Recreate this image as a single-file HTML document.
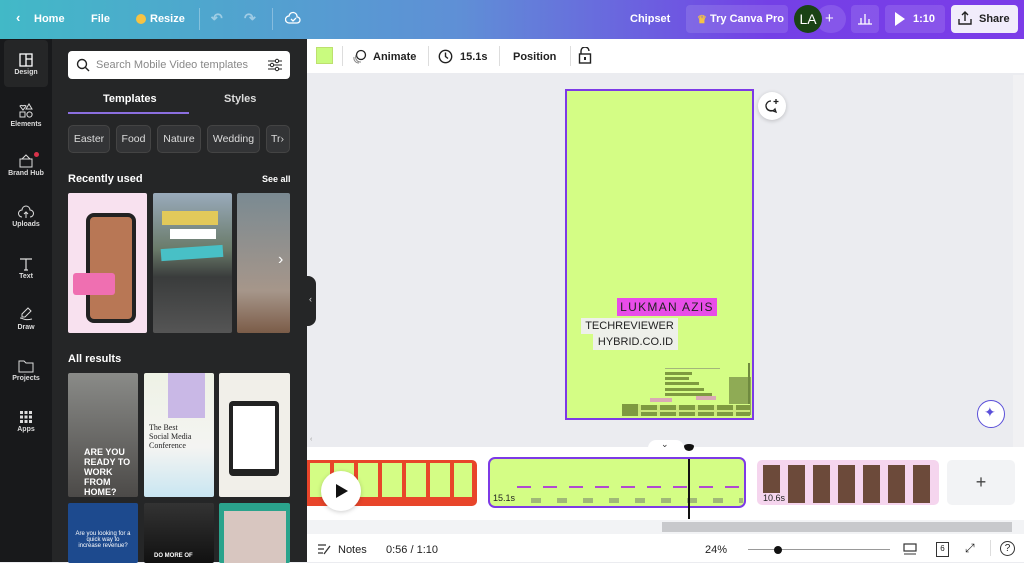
<!DOCTYPE html>
<html><head><meta charset="utf-8"><style>
*{box-sizing:border-box;margin:0;padding:0}
body{width:1024px;height:562px;overflow:hidden;font-family:"Liberation Sans",sans-serif;position:relative;background:#ebecf0}
.a{position:absolute}
.top{left:0;top:0;width:1024px;height:39px;background:linear-gradient(90deg,#42b9c7 0%,#5f8fd6 45%,#7440e6 75%,#7b3ce8 100%);color:#fff;font-weight:bold;font-size:11px}
.top span{position:absolute;top:13px}
.rail{left:0;top:39px;width:52px;height:523px;background:#18191b}
.rail .it{position:absolute;left:0;width:52px;text-align:center;color:#ddd;font-size:7px;font-weight:bold}
.panel{left:52px;top:39px;width:255px;height:523px;background:#252627;color:#fff}
.chip{position:absolute;top:86px;height:28px;border:1px solid #444;border-radius:5px;background:#333436;color:#ddd;font-size:10.5px;line-height:26px;text-align:center;overflow:hidden;white-space:nowrap}
.th{position:absolute;border-radius:2px;overflow:hidden}
.tool{left:307px;top:39px;width:717px;height:34px;background:#fff;font-size:11px;font-weight:bold;color:#222}
.tool span{position:absolute;top:12px}
.tl{left:307px;top:447px;width:717px;height:87px;background:#fff}
.bot{left:307px;top:534px;width:717px;height:28px;background:#fff;font-size:11px;color:#222}
.bar{position:absolute;height:3px;background:#7e9a40}
</style></head><body>
<div class="a top">
<span style="left:16px;font-size:13px;top:10px">‹</span><span style="left:34px">Home</span><span style="left:91px">File</span>
<span style="left:136px;width:10px;height:10px;border-radius:50%;background:#f6c343;top:14px"></span><span style="left:150px">Resize</span>
<span style="left:199px;top:8px;width:1px;height:22px;background:rgba(255,255,255,.3)"></span>
<span style="left:211px;font-size:14px;top:10px;color:rgba(255,255,255,.45)">↶</span><span style="left:244px;font-size:14px;top:10px;color:rgba(255,255,255,.45)">↷</span>
<span style="left:272px;top:8px;width:1px;height:22px;background:rgba(255,255,255,.3)"></span>
<svg class="a" style="left:285px;top:11px" width="16" height="14"><path d="M4 12h8a3 3 0 0 0 0-6 4 4 0 0 0-8-1 3.5 3.5 0 0 0 0 7z M6 8l2 2 3-3" fill="none" stroke="#fff" stroke-width="1.3"/></svg>
<span style="left:630px">Chipset</span>
<div class="a" style="left:686px;top:5px;width:102px;height:28px;background:rgba(255,255,255,.12);border-radius:4px"></div>
<span style="left:697px;color:#f6c343">♛</span><span style="left:710px">Try Canva Pro</span>
<div class="a" style="left:816px;top:5px;width:30px;height:28px;border-radius:14px;background:rgba(255,255,255,.12)"></div>
<div class="a" style="left:794px;top:5px;width:28px;height:28px;border-radius:50%;background:#1a4315;font-size:14px;font-weight:normal;text-align:center;line-height:28px">LA</div>
<span style="left:825px;top:10px;font-size:15px;font-weight:normal">+</span>
<div class="a" style="left:851px;top:5px;width:28px;height:28px;background:rgba(255,255,255,.12);border-radius:4px"></div>
<svg class="a" style="left:857px;top:11px" width="16" height="14"><path d="M1 13h14M4 13V7M8 13V3M12 13V8" stroke="#fff" stroke-width="1.3"/></svg>
<div class="a" style="left:885px;top:5px;width:60px;height:28px;background:rgba(255,255,255,.12);border-radius:4px"></div>
<svg class="a" style="left:895px;top:12px" width="10" height="14"><path d="M0 0L10 7L0 14z" fill="#fff"/></svg><span style="left:913px">1:10</span>
<div class="a" style="left:951px;top:5px;width:67px;height:28px;background:#f1ecfb;border-radius:4px"></div>
<svg class="a" style="left:958px;top:11px" width="14" height="14"><path d="M1 8v5h12V8M7 10V1M4 4l3-3 3 3" fill="none" stroke="#222" stroke-width="1.4"/></svg>
<span style="left:979px;color:#222">Share</span>
</div>

<div class="a rail">
<div class="a" style="left:4px;top:1px;width:44px;height:47px;background:#252627;border-radius:4px"></div>
<div class="it" style="top:14px"><svg width="14" height="14"><rect x="1" y="1" width="12" height="12" fill="none" stroke="#fff" stroke-width="1.3"/><path d="M7 1v12M7 6h6" stroke="#fff" stroke-width="1.3"/></svg><br>Design</div>
<div class="it" style="top:64px"><svg width="16" height="16"><path d="M2 3a2 2 0 0 1 3 0 2 2 0 0 1 3 0L5 7z M11 1l3 5h-6z" fill="none" stroke="#ddd"/><rect x="2" y="9" width="5" height="5" fill="none" stroke="#ddd"/><circle cx="11.5" cy="11.5" r="2.6" fill="none" stroke="#ddd"/></svg><br>Elements</div>
<div class="it" style="top:115px"><div style="position:absolute;left:34px;top:-2px;width:5px;height:5px;border-radius:50%;background:#d9324a"></div><svg width="16" height="14"><rect x="2" y="5" width="12" height="8" fill="none" stroke="#ddd"/><path d="M4 5l4-4 4 4" fill="none" stroke="#ddd"/></svg><br>Brand Hub</div>
<div class="it" style="top:166px"><svg width="16" height="14"><path d="M4 12a3.5 3.5 0 0 1 0-7 4 4 0 0 1 8 0 3.5 3.5 0 0 1 0 7M8 13V7M6 9l2-2 2 2" fill="none" stroke="#ddd"/></svg><br>Uploads</div>
<div class="it" style="top:218px"><svg width="14" height="14"><path d="M1 2h12M7 2v11M5 13h4" stroke="#ddd" stroke-width="1.2"/></svg><br>Text</div>
<div class="it" style="top:268px"><svg width="16" height="15"><path d="M10 1l3 3-6 6H4V7z M2 11c3 0 4 3 12 1" fill="none" stroke="#ddd"/></svg><br>Draw</div>
<div class="it" style="top:320px"><svg width="16" height="14"><path d="M1 2h5l2 2h7v9H1z" fill="none" stroke="#ddd"/></svg><br>Projects</div>
<div class="it" style="top:371px"><svg width="14" height="14" fill="#ddd"><rect x="1" y="1" width="3" height="3"/><rect x="5.5" y="1" width="3" height="3"/><rect x="10" y="1" width="3" height="3"/><rect x="1" y="5.5" width="3" height="3"/><rect x="5.5" y="5.5" width="3" height="3"/><rect x="10" y="5.5" width="3" height="3"/><rect x="1" y="10" width="3" height="3"/><rect x="5.5" y="10" width="3" height="3"/><rect x="10" y="10" width="3" height="3"/></svg><br>Apps</div>
</div>

<div class="a panel">
<div class="a" style="left:16px;top:12px;width:222px;height:28px;background:#fff;border-radius:4px"></div>
<svg class="a" style="left:24px;top:19px" width="14" height="14"><circle cx="6" cy="6" r="4.5" fill="none" stroke="#222" stroke-width="1.4"/><path d="M9.5 9.5L13 13" stroke="#222" stroke-width="1.4"/></svg>
<div class="a" style="left:44px;top:20px;font-size:11px;color:#888">Search Mobile Video templates</div>
<svg class="a" style="left:215px;top:19px" width="16" height="14"><path d="M1 3h14M1 7h14M1 11h14" stroke="#222"/><circle cx="10" cy="3" r="1.7" fill="#fff" stroke="#222"/><circle cx="5" cy="7" r="1.7" fill="#fff" stroke="#222"/><circle cx="10" cy="11" r="1.7" fill="#fff" stroke="#222"/></svg>
<div class="a" style="left:51px;top:54px;font-size:11px;font-weight:bold">Templates</div>
<div class="a" style="left:172px;top:54px;font-size:11px;font-weight:bold;color:#ddd">Styles</div>
<div class="a" style="left:16px;top:73px;width:121px;height:2px;background:#8b6fe0"></div>
<div class="chip" style="left:16px;width:42px">Easter</div><div class="chip" style="left:64px;width:35px">Food</div><div class="chip" style="left:105px;width:44px">Nature</div><div class="chip" style="left:155px;width:53px">Wedding</div><div class="chip" style="left:214px;width:24px;text-align:left;padding-left:4px">Tr›</div>
<div class="a" style="left:16px;top:134px;font-size:11px;font-weight:bold">Recently used</div>
<div class="a" style="left:210px;top:135px;font-size:9px;font-weight:bold">See all</div>
<div class="th" style="left:16px;top:154px;width:79px;height:140px;background:#f8e1ef"><div class="a" style="left:18px;top:20px;width:50px;height:110px;background:#b87755;border:4px solid #222;border-radius:8px"></div><div class="a" style="left:5px;top:80px;width:42px;height:22px;background:#ef6fb1;border-radius:3px"></div></div>
<div class="th" style="left:101px;top:154px;width:79px;height:140px;background:linear-gradient(#9ab 0%,#6a7b6a 40%,#3a3c3c 60%,#555 100%)"><div class="a" style="left:9px;top:18px;width:56px;height:14px;background:#e2c95a"></div><div class="a" style="left:17px;top:36px;width:46px;height:10px;background:#fff"></div><div class="a" style="left:8px;top:54px;width:62px;height:12px;background:#48c0c6;transform:rotate(-4deg)"></div></div>
<div class="th" style="left:185px;top:154px;width:53px;height:140px;background:linear-gradient(#7a8a92,#a6968a 70%,#7b5c48)"></div>
<div class="a" style="left:226px;top:212px;color:#fff;font-size:16px">›</div>
<div class="a" style="left:16px;top:314px;font-size:11px;font-weight:bold">All results</div>
<div class="th" style="left:16px;top:334px;width:70px;height:124px;background:linear-gradient(#8a8b88,#4c4a48)"><div class="a" style="left:16px;top:74px;color:#fff;font-size:9px;font-weight:bold;line-height:10px">ARE YOU<br>READY TO<br>WORK<br>FROM<br>HOME?</div></div>
<div class="th" style="left:92px;top:334px;width:70px;height:124px;background:linear-gradient(#eef2e5,#f4f4f2 60%,#c9e6f2)"><div class="a" style="left:24px;top:0;width:37px;height:45px;background:#c9b8e6"></div><div class="a" style="left:5px;top:50px;font-family:'Liberation Serif',serif;font-size:8px;color:#222;line-height:9px">The Best<br>Social Media<br>Conference</div></div>
<div class="th" style="left:167px;top:334px;width:71px;height:124px;background:#f1efe9"><div class="a" style="left:10px;top:28px;width:50px;height:75px;background:#222;border-radius:4px"></div><div class="a" style="left:14px;top:33px;width:42px;height:63px;background:#fff"></div></div>
<div class="th" style="left:16px;top:464px;width:70px;height:60px;background:#1d4a8e"><div class="a" style="left:7px;top:28px;color:#fff;font-size:6px;text-align:center;width:56px">Are you looking for a quick way to increase revenue?</div></div>
<div class="th" style="left:92px;top:464px;width:70px;height:60px;background:linear-gradient(#333,#111)"><div class="a" style="left:10px;top:50px;color:#fff;font-size:6px;font-weight:bold">DO MORE OF</div></div>
<div class="th" style="left:167px;top:464px;width:71px;height:60px;background:#2aa38c"><div class="a" style="left:5px;top:8px;width:62px;height:52px;background:#d8c6c0"></div></div>
</div>
<div class="a" style="left:307px;top:276px;width:9px;height:50px;background:#252627;border-radius:0 8px 8px 0"></div>
<div class="a" style="left:309px;top:294px;color:#ddd;font-size:9px">‹</div>

<div class="a tool">
<div class="a" style="left:9px;top:8px;width:17px;height:17px;background:#c9fb7f;border:1px solid #bde06e"></div>
<div class="a" style="left:35px;top:7px;width:1px;height:20px;background:#ddd"></div>
<svg class="a" style="left:45px;top:10px" width="15" height="15"><circle cx="9" cy="6" r="4.5" fill="none" stroke="#222" stroke-width="1.3"/><path d="M4 6a5 5 0 0 0 5 7M2 8a5 5 0 0 0 5 6" fill="none" stroke="#888"/></svg>
<span style="left:66px">Animate</span>
<div class="a" style="left:121px;top:7px;width:1px;height:20px;background:#ddd"></div>
<svg class="a" style="left:131px;top:10px" width="15" height="15"><circle cx="7.5" cy="7.5" r="6.2" fill="none" stroke="#222" stroke-width="1.4"/><path d="M7.5 3.5v4l2.5 2" fill="none" stroke="#222" stroke-width="1.4"/></svg>
<span style="left:153px">15.1s</span>
<div class="a" style="left:192px;top:7px;width:1px;height:20px;background:#ddd"></div>
<span style="left:206px;font-weight:bold">Position</span>
<div class="a" style="left:263px;top:7px;width:1px;height:20px;background:#ddd"></div>
<svg class="a" style="left:271px;top:8px" width="14" height="17"><path d="M3 7V4a4 4 0 0 1 8 0" fill="none" stroke="#222" stroke-width="1.4"/><rect x="1.5" y="7" width="11" height="9" fill="none" stroke="#222" stroke-width="1.4"/><rect x="6" y="10" width="2" height="3" fill="#222"/></svg>
</div>

<div class="a" style="left:565px;top:89px;width:189px;height:331px;background:#d4fd85;border:2px solid #7d3ae6"></div>
<div class="a" style="left:617px;top:298px;width:100px;height:18px;background:#e84de8;font-size:12px;letter-spacing:1.3px;color:#222;line-height:18px;text-align:center">LUKMAN AZIS</div>
<div class="a" style="left:581px;top:318px;width:97px;height:16px;background:#eef0ea;font-size:11px;color:#222;line-height:16px;text-align:center">TECHREVIEWER</div>
<div class="a" style="left:593px;top:334px;width:85px;height:16px;background:#eef0ea;font-size:11px;color:#222;line-height:16px;text-align:center">HYBRID.CO.ID</div>
<div class="bar" style="left:665px;top:368px;width:55px;height:1px;background:#a3b67a"></div>
<div class="bar" style="left:665px;top:372px;width:27px"></div>
<div class="bar" style="left:665px;top:377px;width:24px"></div>
<div class="bar" style="left:665px;top:382px;width:34px"></div>
<div class="bar" style="left:665px;top:388px;width:39px"></div>
<div class="bar" style="left:665px;top:393px;width:47px"></div>
<div class="a" style="left:729px;top:377px;width:22px;height:38px;background:#8fab55"></div>
<div class="a" style="left:748px;top:363px;width:2px;height:50px;background:#6f8a3f"></div>
<div class="a" style="left:650px;top:398px;width:22px;height:4px;background:#d9aab5"></div>
<div class="a" style="left:622px;top:404px;width:128px;height:12px;background:repeating-linear-gradient(90deg,#7e9a40 0 16px,#c9e77a 16px 19px)"></div>
<div class="a" style="left:640px;top:404px;width:110px;height:1px;background:#d4fd85"></div>
<div class="a" style="left:640px;top:410px;width:110px;height:2px;background:#c9e77a"></div>
<div class="a" style="left:696px;top:396px;width:20px;height:4px;background:#d9aab5"></div>

<div class="a" style="left:758px;top:92px;width:28px;height:28px;border-radius:50%;background:#fff;box-shadow:0 1px 4px rgba(0,0,0,.2)"></div>
<svg class="a" style="left:764px;top:98px" width="16" height="16"><path d="M7 3a5 5 0 1 0 4 8l1 3-4-1.5A5 5 0 0 1 2 8" fill="none" stroke="#222" stroke-width="1.3"/><path d="M12 1v5M9.5 3.5h5" stroke="#222" stroke-width="1.3"/></svg>
<div class="a" style="left:977px;top:400px;width:28px;height:28px;border-radius:50%;background:#fff;border:1.5px solid #5a4fd9"></div>
<div class="a" style="left:984px;top:404px;color:#5a4fd9;font-size:14px">✦</div>
<div class="a" style="left:1013px;top:75px;width:11px;height:372px;background:#f1f1f3"></div>
<div class="a" style="left:310px;top:436px;width:700px;height:10px;color:#999;font-size:7px">‹</div>
<div class="a" style="left:648px;top:440px;width:36px;height:12px;background:#fff;border-radius:8px 8px 0 0"></div>
<div class="a" style="left:661px;top:439px;font-size:9px;color:#333">⌄</div>

<div class="a tl">
<div class="a" style="left:0;top:13px;width:170px;height:46px;background:#e8452a;border-radius:0 5px 5px 0"></div>
<div class="a" style="left:3px;top:16px;width:162px;height:34px;background:repeating-linear-gradient(90deg,#d4fd85 0 20px,#e8452a 20px 24px)"></div>
<div class="a" style="left:14px;top:24px;width:40px;height:40px;border-radius:50%;background:#fff;box-shadow:0 1px 5px rgba(0,0,0,.2)"></div>
<svg class="a" style="left:29px;top:37px" width="12" height="14"><path d="M0 0L12 7L0 14z" fill="#111"/></svg>
<div class="a" style="left:181px;top:10px;width:258px;height:51px;background:#d4fd85;border:2px solid #7d3ae6;border-radius:7px"></div>
<div class="a" style="left:186px;top:46px;font-size:9px;color:#222">15.1s</div>
<div class="a" style="left:210px;top:39px;width:222px;height:2px;background:repeating-linear-gradient(90deg,#b04ad0 0 14px,transparent 14px 26px)"></div>
<div class="a" style="left:214px;top:51px;width:222px;height:5px;background:repeating-linear-gradient(90deg,transparent 0 10px,#a0b878 10px 20px,transparent 20px 26px)"></div>
<div class="a" style="left:381px;top:12px;width:2px;height:60px;background:#111"></div>
<div class="a" style="left:377px;top:-3px;width:10px;height:7px;background:#111;border-radius:50% 50% 50% 50%/30% 30% 70% 70%"></div>
<div class="a" style="left:450px;top:13px;width:182px;height:45px;background:#f5d5ee;border-radius:5px"></div>
<div class="a" style="left:456px;top:18px;width:170px;height:38px;background:repeating-linear-gradient(90deg,#6c4a3a 0 17px,transparent 17px 25px)"></div>
<div class="a" style="left:456px;top:46px;font-size:9px;color:#222;background:#f5d5ee">10.6s</div>
<div class="a" style="left:640px;top:13px;width:68px;height:45px;background:#f2f3f5;border-radius:5px;text-align:center;line-height:45px;font-size:18px;color:#444">+</div>
<div class="a" style="left:0;top:73px;width:717px;height:14px;background:#f2f3f5"></div>
<div class="a" style="left:355px;top:75px;width:350px;height:10px;background:#c8c9cc"></div>
</div>

<div class="a bot">
<svg class="a" style="left:11px;top:10px" width="14" height="11"><path d="M0 1h8M0 5h6M0 9h5M6 10l6-8" stroke="#333" stroke-width="1.3"/></svg>
<div class="a" style="left:31px;top:10px">Notes</div>
<div class="a" style="left:79px;top:10px">0:56 / 1:10</div>
<div class="a" style="left:398px;top:10px">24%</div>
<div class="a" style="left:441px;top:15px;width:142px;height:1px;background:#999"></div>
<div class="a" style="left:467px;top:12px;width:8px;height:8px;border-radius:50%;background:#111"></div>
<svg class="a" style="left:596px;top:9px" width="14" height="13"><rect x="1" y="1" width="12" height="7" fill="none" stroke="#333" stroke-width="1.2"/><path d="M1 11h12" stroke="#999" stroke-width="2"/></svg>
<div class="a" style="left:629px;top:8px;width:13px;height:15px;border:1.3px solid #333;font-size:8px;text-align:center;line-height:12px">6</div>
<div class="a" style="left:658px;top:7px;font-size:12px">⤢</div>
<div class="a" style="left:683px;top:6px;width:1px;height:16px;background:#ddd"></div>
<div class="a" style="left:693px;top:7px;width:15px;height:15px;border:1.3px solid #333;border-radius:50%;font-size:10px;text-align:center;line-height:13px">?</div>
</div>
</body></html>
